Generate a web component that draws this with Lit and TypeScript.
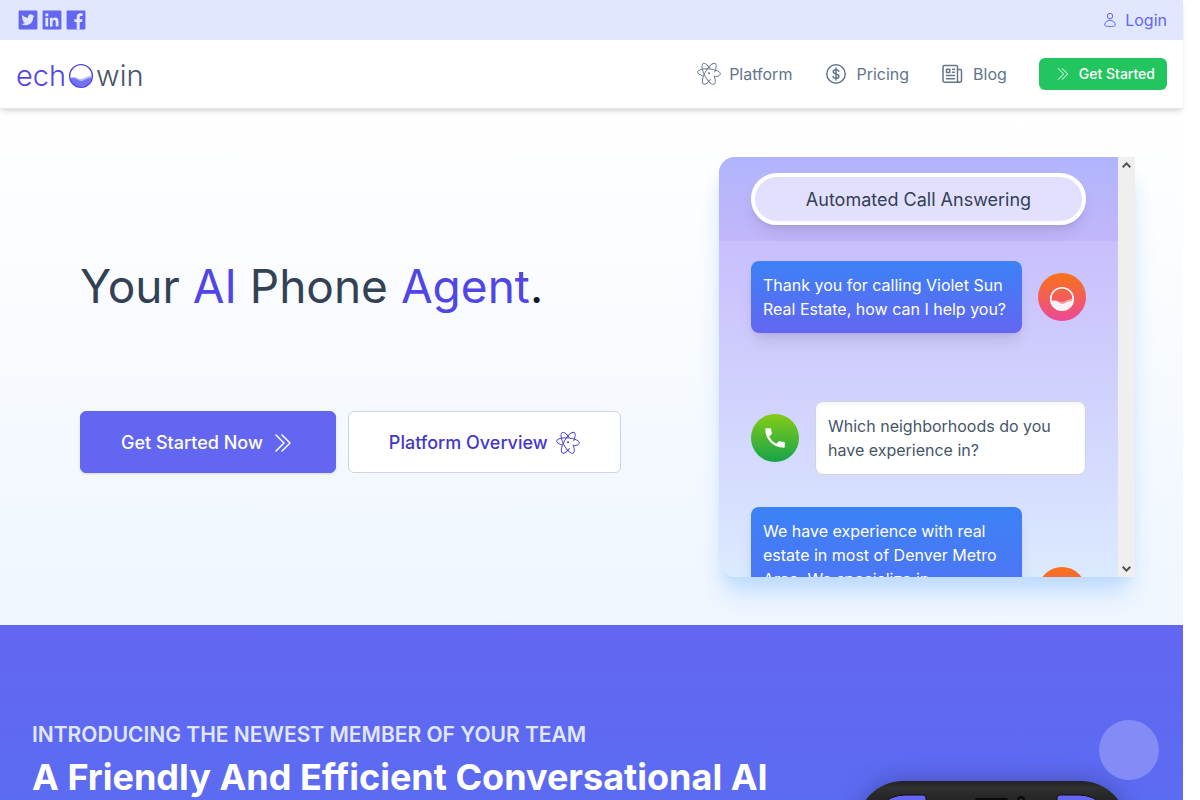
import { LitElement, html, css, svg } from "lit";
import { customElement, query } from "lit/decorators.js";

const atomIcon = html`<svg class="icon" viewBox="0 0 24 24" fill="none" stroke="currentColor" stroke-width=".9" stroke-linecap="round" aria-hidden="true">
  <ellipse cx="12" cy="11" rx="11.5" ry="4.1" transform="rotate(5 12 11)" pathLength="100" stroke-dasharray="76 24" stroke-dashoffset="63" />
  <ellipse cx="11.6" cy="11.9" rx="11.6" ry="4.2" transform="rotate(62 11.6 11.9)" pathLength="100" stroke-dasharray="84 16" stroke-dashoffset="17" />
  <ellipse cx="12.2" cy="11.7" rx="11.8" ry="4.2" transform="rotate(-60 12.2 11.7)" pathLength="100" stroke-dasharray="84 16" stroke-dashoffset="67" />
  <circle cx="12" cy="11.3" r="1" fill="currentColor" stroke="none" />
</svg>`;

const chevrons = html`<svg class="icon" viewBox="0 0 24 24" fill="none" stroke="currentColor" stroke-width="1.5" stroke-linecap="round" stroke-linejoin="round" aria-hidden="true">
  <path d="M5 4l8 8-8 8M11 4l8 8-8 8" />
</svg>`;

const waves = svg`
  <path d="M2.2 13.6c2.2-1 4.2-1 6.2.2 1.4.8 2.4 1.2 3.8 1 3.6-.6 5.6-2.6 9.7-3.2-.2 6-4.6 10.4-9.9 10.4-5.2 0-9.2-3.6-9.8-8.4z" fill="currentColor" opacity=".45" />
  <path d="M2.1 14.2c2.6-.6 5-.2 7.1 1.2 1.8 1.3 3 1.6 4.6 1 2.6-1.2 4.8-2.8 8-2.5-1 5-4.9 8.2-9.8 8.2-5 0-9-3.3-9.9-7.9z" fill="currentColor" opacity=".85" />`;

@customElement("app-root")
export class AppRoot extends LitElement {
  @query(".chat-scroll") private chat!: HTMLElement;

  static styles = css`
    :host {
      display: block;
      box-sizing: border-box;
      height: 100vh;
      overflow: hidden;
      padding-right: 17px;
      background: #fff;
      color: #0f172a;
      font: 400 16px/24px Inter, sans-serif;
    }
    *, *::before, *::after { box-sizing: border-box; }
    h1, h2, p { margin: 0; }
    a { color: inherit; text-decoration: none; }
    svg { display: block; flex: none; }
    button { border: 0; font: inherit; cursor: pointer; }
    .icon { width: 24px; height: 24px; }

    header {
      position: relative;
      z-index: 1;
      border-bottom: 1px solid #e2e8f0;
      background: #fff;
      box-shadow: 0 4px 6px -1px rgb(0 0 0 / 0.1), 0 2px 4px -2px rgb(0 0 0 / 0.1);
    }
    .topbar {
      display: flex;
      align-items: center;
      justify-content: space-between;
      height: 40px;
      padding: 0 16px;
      background: #e0e7ff;
      color: #6366f1;
    }
    .social { display: flex; }
    .login { display: flex; align-items: center; gap: 8px; }
    .login svg { width: 16px; height: 16px; }
    .nav {
      display: flex;
      align-items: center;
      justify-content: space-between;
      height: 68px;
      padding: 0 16px;
    }
    .logo {
      display: flex;
      align-items: center;
      gap: 2px;
      padding-top: 4px;
      color: #4f46e5;
      font-size: 29px;
      font-weight: 300;
      line-height: 32px;
    }
    .logo .tail { color: #475569; }
    .logo svg { width: 26px; height: 26px; }
    .links { display: flex; align-items: center; gap: 32px; color: #64748b; }
    .links a { display: flex; align-items: center; gap: 8px; }
    .links .start {
      height: 32px;
      padding: 0 12px 0 16px;
      border-radius: 6px;
      background: #22c55e;
      color: #fff;
      font-size: 14px;
      font-weight: 500;
    }
    .start .icon { width: 16px; height: 16px; }

    .hero {
      display: flex;
      align-items: center;
      padding: 48px;
      background: linear-gradient(#fff, #eff6ff);
    }
    .pitch { flex: 1; padding-left: 32px; }
    h1 { color: #334155; font-size: 46px; font-weight: 400; line-height: 50px; }
    h1 em { color: #4f46e5; font-style: normal; }
    h1 .dot { color: #0f172a; }
    .actions { display: flex; gap: 12px; margin-top: 100px; }
    .action {
      display: flex;
      align-items: center;
      gap: 8px;
      padding: 17px 40px 15px;
      border: 1px solid #cbd5e1;
      border-radius: 6px;
      background: #fff;
      color: #4338ca;
      font-size: 18px;
      font-weight: 500;
      line-height: 28px;
    }
    .action.primary {
      border-color: #6366f1;
      background: #6366f1;
      color: #fff;
      box-shadow: 0 1px 3px rgb(0 0 0 / 0.1), 0 1px 2px -1px rgb(0 0 0 / 0.1);
    }

    .chat {
      display: flex;
      width: 416px;
      height: 420px;
      border-radius: 16px;
      box-shadow: 0 20px 25px -5px #bfdbfe, 0 8px 10px -6px #bfdbfe;
    }
    .chat-scroll {
      flex: 1;
      overflow-y: auto;
      scrollbar-width: none;
      border-radius: 16px 0 0 16px;
      background: linear-gradient(#c4b5fd, #d0d0fd 54%, #dbeafe);
    }
    .chat-head {
      position: sticky;
      top: 0;
      padding: 16px 32px;
      background: linear-gradient(#b0b5fd, #c3b6fb);
    }
    .pill {
      padding: 9px 16px 7px;
      border: 4px solid #fff;
      border-radius: 26px;
      background: rgb(255 255 255 / 0.58);
      box-shadow: 0 10px 15px -3px rgb(0 0 0 / 0.1), 0 4px 6px -4px rgb(0 0 0 / 0.1);
      color: #334155;
      font-size: 18px;
      line-height: 28px;
      text-align: center;
    }
    .thread { display: flex; flex-direction: column; gap: 32px; padding: 20px 32px; }
    .turn { display: flex; align-items: center; gap: 16px; }
    .turn.first { margin-bottom: 36px; }
    .bubble {
      flex: 1;
      padding: 12px;
      border-radius: 8px;
      background: linear-gradient(#3b82f6, #6366f1);
      box-shadow: 0 10px 15px -3px rgb(0 0 0 / 0.1), 0 4px 6px -4px rgb(0 0 0 / 0.1);
      color: #fff;
    }
    .bubble.caller {
      border: 1px solid #d1d5db;
      background: #fff;
      box-shadow: inset 0 2px 4px rgb(0 0 0 / 0.05);
      color: #475569;
    }
    .bubble.long { min-height: 168px; }
    .avatar {
      display: grid;
      place-items: center;
      flex: none;
      width: 48px;
      height: 48px;
      border-radius: 50%;
      background: linear-gradient(#f97316, #ec4899);
      color: #fff;
    }
    .avatar svg { width: 26px; height: 26px; margin-top: 4px; }
    .avatar.phone { background: linear-gradient(#84cc16, #16a34a); }
    .avatar.phone svg { margin-top: 0; }
    .bar {
      display: flex;
      flex-direction: column;
      justify-content: space-between;
      width: 17px;
      background: #efefef;
    }
    .bar button {
      display: grid;
      place-items: center;
      width: 17px;
      height: 16px;
      padding: 0;
      background: none;
      color: #505050;
    }
    .bar svg { width: 9px; height: 6px; }

    .feature {
      position: relative;
      display: grid;
      grid-template-columns: 768px 1fr;
      gap: 32px;
      height: 900px;
      padding: 96px 32px;
      background: linear-gradient(#6366f1, #3b82f6);
      color: #fff;
    }
    .kicker {
      color: #e0e7ff;
      font-size: 21px;
      font-weight: 600;
      line-height: 28px;
      text-transform: uppercase;
    }
    h2 { margin-top: 8px; font-size: 36px; font-weight: 700; line-height: 40px; white-space: nowrap; }
    .bubble-dot {
      position: absolute;
      top: 95px;
      right: 24px;
      width: 60px;
      height: 60px;
      border-radius: 50%;
      background: #838bf7;
    }
    .device { justify-self: center; width: 270px; margin-top: 60px; filter: drop-shadow(0 0 12px rgb(30 27 75 / 0.35)); }
  `;

  private scrollChat(by: number) {
    this.chat.scrollBy({ top: by, behavior: "smooth" });
  }

  render() {
    return html`
      <header>
        <div class="topbar">
          <div class="social">
            <a href="#twitter" aria-label="Twitter"><svg class="icon" viewBox="0 0 24 24">
              <rect x="2.6" y="2.6" width="18.8" height="18.8" rx=".8" fill="#6366f1" />
              <path fill="#e0e7ff" d="M18.5 7.7c-.5.2-1 .4-1.5.4.5-.3 1-.8 1.2-1.4-.5.3-1.1.5-1.7.6a2.67 2.67 0 0 0-4.6 2.4c-2.2-.1-4.2-1.2-5.5-2.8-.7 1.2-.4 2.8.8 3.6-.4 0-.8-.1-1.2-.3 0 1.2.9 2.4 2.1 2.7-.4.1-.8.1-1.2 0 .3 1.1 1.3 1.8 2.5 1.9a5.4 5.4 0 0 1-4 1.1 7.6 7.6 0 0 0 11.8-6.7c.5-.4 1-.9 1.3-1.5z" />
            </svg></a>
            <a href="#linkedin" aria-label="LinkedIn"><svg class="icon" viewBox="0 0 24 24">
              <rect x="2.6" y="2.6" width="18.8" height="18.8" rx=".8" fill="#6366f1" />
              <path fill="#e0e7ff" d="M5.4 9.7h2.8v8.9H5.4zM6.8 5.2a1.6 1.6 0 1 1 0 3.3 1.6 1.6 0 0 1 0-3.3zM9.9 9.7h2.6v1.2c.5-.8 1.4-1.4 2.7-1.4 2.7 0 3.3 1.8 3.3 4.2v4.9h-2.8v-4.3c0-1.2-.1-2.4-1.5-2.4s-1.6 1.1-1.6 2.3v4.4H9.9z" />
            </svg></a>
            <a href="#facebook" aria-label="Facebook"><svg class="icon" viewBox="0 0 24 24">
              <rect x="2.6" y="2.6" width="18.8" height="18.8" rx=".8" fill="#6366f1" />
              <path fill="#e0e7ff" d="M12.7 21.4v-7.3h-2.4v-2.9h2.4V9c0-2.5 1.5-3.8 3.7-3.8 1 0 1.9.1 2.2.1v2.6h-1.5c-1.2 0-1.4.6-1.4 1.4v1.9h2.8l-.4 2.9h-2.4v7.3z" />
            </svg></a>
          </div>
          <a class="login" href="#login">
            <svg viewBox="0 0 16 16" fill="none" stroke="currentColor" stroke-width="1" stroke-linejoin="round" aria-hidden="true">
              <circle cx="9" cy="4" r="2.7" />
              <path d="M9 8.3c-2.9 0-5.3 2.3-5.3 4.7 0 .9.9 1.5 5.3 1.5s5.3-.6 5.3-1.5c0-2.4-2.4-4.7-5.3-4.7z" />
            </svg>
            Login
          </a>
        </div>
        <nav class="nav" aria-label="Main">
          <a class="logo" href="#home" aria-label="echowin">
            <span>ech</span>
            <svg viewBox="0 0 24 24" aria-hidden="true"><g color="#6366f1">${waves}</g><circle cx="12" cy="12" r="10.5" fill="none" stroke="#4f46e5" stroke-width="1.3" /></svg>
            <span class="tail">win</span>
          </a>
          <div class="links">
            <a href="#platform">${atomIcon}Platform</a>
            <a href="#pricing">
              <svg class="icon" viewBox="0 0 24 24" fill="none" stroke="currentColor" stroke-width="1.5" stroke-linecap="round" stroke-linejoin="round" aria-hidden="true">
                <circle cx="12" cy="12" r="9.2" />
                <path d="M12 6v12M14.8 9.3c-.3-1-1.4-1.6-2.8-1.6-1.7 0-2.8.8-2.8 2.1 0 3 5.7 1.4 5.7 4.4 0 1.3-1.2 2.1-2.9 2.1-1.5 0-2.7-.7-3-1.8" />
              </svg>Pricing</a>
            <a href="#blog">
              <svg class="icon" viewBox="0 0 24 24" fill="none" stroke="currentColor" stroke-width="1.5" stroke-linecap="round" stroke-linejoin="round" aria-hidden="true">
                <path d="M16.5 20.2H4A2 2 0 0 1 2 18.2V5a1.4 1.4 0 0 1 1.4-1.4h11.7A1.4 1.4 0 0 1 16.5 5v13.2a2 2 0 0 0 4 0V8.6a1.1 1.1 0 0 0-1.1-1.1h-2.9M18.5 20.2h-2.5" />
                <path d="M5.5 7.2h3.2v3.2H5.5zM11.5 7.2h2M11.5 10.3h2M5.5 13.5h8M5.5 16.7h8" />
              </svg>Blog</a>
            <a class="start" href="#start">${chevrons}Get Started</a>
          </div>
        </nav>
      </header>

      <main>
        <section class="hero">
          <div class="pitch">
            <h1>Your <em>AI</em> Phone <em>Agent</em><span class="dot">.</span></h1>
            <div class="actions">
              <a class="action primary" href="#start">Get Started Now ${chevrons}</a>
              <a class="action" href="#platform">Platform Overview ${atomIcon}</a>
            </div>
          </div>
          <div class="chat">
            <div class="chat-scroll">
              <div class="chat-head"><p class="pill">Automated Call Answering</p></div>
              <div class="thread">
                <div class="turn first">
                  <p class="bubble">Thank you for calling Violet Sun Real Estate, how can I help you?</p>
                  ${this.agentAvatar()}
                </div>
                <div class="turn">
                  <span class="avatar phone"><svg viewBox="0 0 24 24" fill="currentColor" aria-hidden="true">
                    <path d="M20 15.5c-1.25 0-2.45-.2-3.57-.57a1 1 0 0 0-1.02.24l-2.2 2.2a15.05 15.05 0 0 1-6.59-6.58l2.2-2.21a.96.96 0 0 0 .25-1A11.36 11.36 0 0 1 8.5 4c0-.55-.45-1-1-1H4c-.55 0-1 .45-1 1 0 9.39 7.61 17 17 17 .55 0 1-.45 1-1v-3.5c0-.55-.45-1-1-1z" />
                  </svg></span>
                  <p class="bubble caller">Which neighborhoods do you have experience in?</p>
                </div>
                <div class="turn">
                  <p class="bubble long">We have experience with real estate in most of Denver Metro Area. We specialize in</p>
                  ${this.agentAvatar()}
                </div>
              </div>
            </div>
            <div class="bar">
              <button aria-label="Scroll up" @click=${() => this.scrollChat(-60)}>
                <svg viewBox="0 0 9 6" fill="none" stroke="currentColor" stroke-width="2"><path d="M.7 5.2L4.5 1.4l3.8 3.8" /></svg>
              </button>
              <button aria-label="Scroll down" @click=${() => this.scrollChat(60)}>
                <svg viewBox="0 0 9 6" fill="none" stroke="currentColor" stroke-width="2"><path d="M.7.8l3.8 3.8L8.3.8" /></svg>
              </button>
            </div>
          </div>
        </section>

        <section class="feature">
          <div>
            <p class="kicker">Introducing the newest member of your team</p>
            <h2>A Friendly And Efficient Conversational AI</h2>
          </div>
          <svg class="device" viewBox="0 0 270 560" aria-hidden="true">
            <defs>
              <linearGradient id="shell" x1="0" y1="0" x2="0" y2="1">
                <stop offset="0" stop-color="#222" /><stop offset=".012" stop-color="#303030" /><stop offset=".03" stop-color="#262626" />
              </linearGradient>
            </defs>
            <rect width="270" height="560" rx="46" fill="url(#shell)" />
            <path d="M14 48a34 34 0 0 1 34-34h18a3 3 0 0 1 3 3v4a16 16 0 0 0 16 16h99a16 16 0 0 0 16-16v-4a3 3 0 0 1 3-3h19a34 34 0 0 1 34 34v464a34 34 0 0 1-34 34H48a34 34 0 0 1-34-34z" fill="#6366f1" stroke="#111" />
            <rect x="118" y="17" width="33" height="6" rx="2" fill="#0a0a0a" />
            <circle cx="164" cy="19" r="4" fill="#0a0a0a" />
            <circle cx="164" cy="19" r="1.5" fill="#333" />
          </svg>
          <span class="bubble-dot"></span>
        </section>
      </main>
    `;
  }

  private agentAvatar() {
    return html`<span class="avatar"><svg viewBox="0 0 24 24" aria-hidden="true">${waves}<circle cx="12" cy="12" r="10.4" fill="none" stroke="currentColor" stroke-width="1.5" /></svg></span>`;
  }
}
